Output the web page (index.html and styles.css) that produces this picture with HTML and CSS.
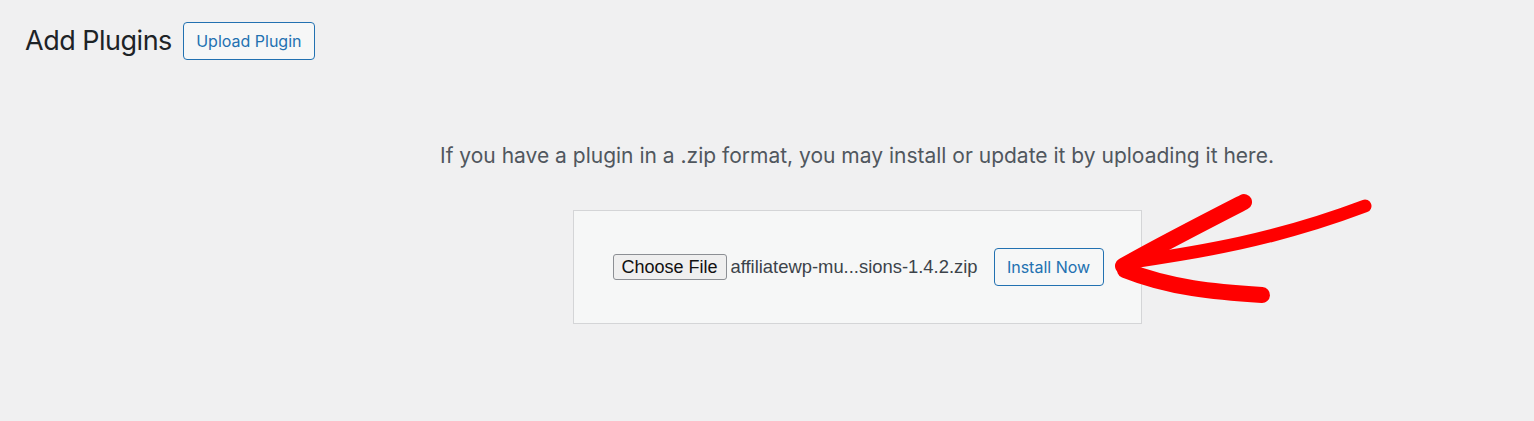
FILE: index.html
```html
<!DOCTYPE html>
<html lang="en">
<head>
<meta charset="utf-8">
<title>Add Plugins</title>
<link rel="stylesheet" href="styles.css">
</head>
<body>
<div class="page">
  <header class="page-header">
    <h1 class="page-title">Add Plugins</h1>
    <button class="wp-button">Upload Plugin</button>
  </header>
  <section class="upload-plugin">
    <p class="install-help">If you have a plugin in a .zip format, you may install or update it by uploading it here.</p>
    <form class="upload-form">
      <span class="file-input">
        <span class="file-button">Choose File</span>
        <span class="file-name">affiliatewp-mu...sions-1.4.2.zip</span>
      </span>
      <button type="button" class="wp-button install-button">Install Now</button>
    </form>
  </section>
  <svg class="annotation-arrow" width="280" height="130" viewBox="1100 185 280 130" aria-hidden="true">
    <path d="M1123 266 C1160 245 1205 222 1244 202" />
    <path class="thin" d="M1132 262 C1200 252 1275 240 1365 206" />
    <path d="M1125 270 C1170 288 1215 292 1262 295" />
  </svg>
</div>
</body>
</html>
```

FILE: styles.css
```css
html, body {
  margin: 0;
  padding: 0;
}

body {
  background: #f0f0f1;
  font-family: Inter, "Noto Sans", "Liberation Sans", sans-serif;
  color: #1d2327;
  width: 1534px;
  height: 421px;
  overflow: hidden;
}

.page {
  position: relative;
  height: 421px;
}

.page-header {
  display: flex;
  align-items: center;
  gap: 11px;
  padding: 22px 0 0 25px;
}

.page-title {
  margin: 0;
  font-size: 27px;
  font-weight: 400;
  line-height: 38px;
  color: #1d2327;
  letter-spacing: -0.5px;
}

.wp-button {
  box-sizing: border-box;
  height: 38px;
  padding: 0;
  border: 1px solid #2271b1;
  border-radius: 4px;
  background: #f6f7f7;
  color: #2271b1;
  font-family: Inter, "Noto Sans", "Liberation Sans", sans-serif;
  font-size: 16px;
  line-height: 36px;
  white-space: nowrap;
  text-align: center;
  cursor: pointer;
}

.page-header .wp-button {
  width: 132px;
}

.upload-plugin {
  margin-left: 180px;
  text-align: center;
  padding-top: 81px;
}

.install-help {
  margin: 0;
  font-size: 21px;
  line-height: 30px;
  color: #50575e;
}

.upload-form {
  display: inline-flex;
  align-items: center;
  box-sizing: border-box;
  width: 569px;
  height: 114px;
  margin-top: 39px;
  padding: 0 37px 0 39px;
  border: 1px solid #d4d5d7;
  background: #f6f7f7;
}

.file-input {
  display: flex;
  align-items: center;
  font-family: "Liberation Sans", Arial, sans-serif;
}

.file-button {
  box-sizing: border-box;
  height: 26px;
  width: 114px;
  border: 1px solid #8c8f94;
  border-radius: 3px;
  background: #efefef;
  color: #111;
  font-size: 18px;
  line-height: 24px;
  text-align: center;
}

.file-name {
  margin-left: 4px;
  font-size: 18.4px;
  color: #3c434a;
}

.install-button {
  width: 110px;
  margin-left: auto;
}

.annotation-arrow {
  position: absolute;
  left: 1100px;
  top: 185px;
  fill: none;
  stroke: #ff0000;
  stroke-width: 16;
  stroke-linecap: round;
  stroke-linejoin: round;
}

.annotation-arrow .thin {
  stroke-width: 13;
}
```
